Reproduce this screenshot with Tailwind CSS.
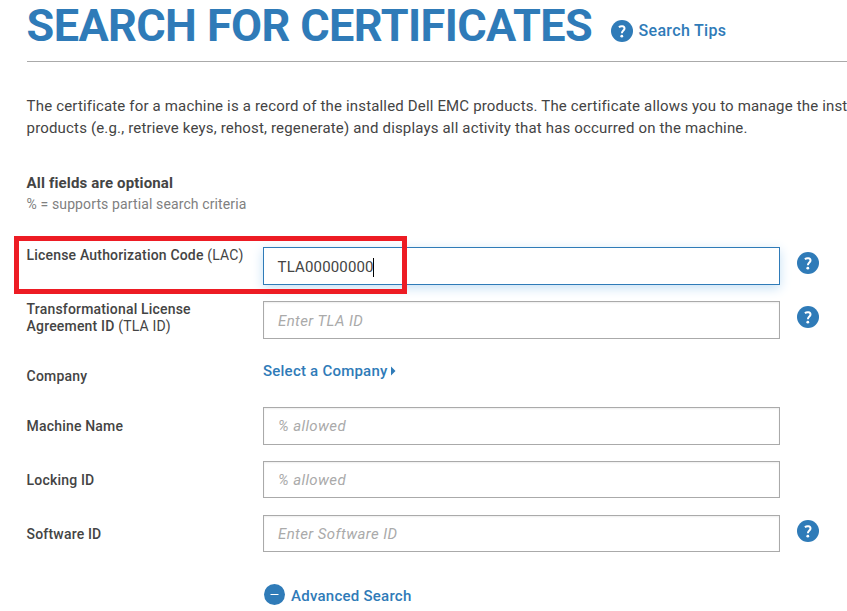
<!DOCTYPE html>
<html lang="en">
<head>
    <meta charset="UTF-8">
    <meta name="viewport" content="width=device-width, initial-scale=1.0">
    <script src="https://cdn.jsdelivr.net/npm/@tailwindcss/browser@4"></script>
    <title>Search for Certificates</title>
</head>
<body class="bg-white font-['Roboto',sans-serif] text-[#444] overflow-hidden">
    <svg class="hidden">
        <symbol id="help" viewBox="0 0 22 22">
            <circle cx="11" cy="11" r="11" fill="#2f7bb8"/>
            <path d="M7.9 7.2C9.6 5.8 13.5 5.8 13.5 8.4C13.5 10.5 10.9 10.5 10.9 13.2" fill="none" stroke="#fff" stroke-width="2"/>
            <circle cx="10.8" cy="16.2" r="1.4" fill="#fff"/>
        </symbol>
    </svg>

    <main class="ml-[26.6px] h-[611px] relative">
        <header class="flex h-[62px] border-b border-[#aaa]">
            <h1 class="text-[45px] leading-[52px] tracking-[-0.6px] font-bold text-[#2f7bb8] whitespace-nowrap w-[584.4px] shrink-0">SEARCH FOR CERTIFICATES</h1>
            <a class="flex items-center h-[22px] mt-5 text-[#2f7bb8] text-base tracking-[0.33px] font-medium whitespace-nowrap"><svg class="size-[22px] mr-[5.5px]"><use href="#help"/></svg>Search Tips</a>
        </header>

        <p class="mt-[33px] text-[15px] leading-[22px] tracking-[0.163px] whitespace-nowrap">The certificate for a machine is a record of the installed Dell EMC products. The certificate allows you to manage the inst<br>products (e.g., retrieve keys, rehost, regenerate) and displays all activity that has occurred on the machine.</p>

        <div class="mt-[33px] text-[15px] leading-[22px] tracking-[0.15px] font-bold">All fields are optional</div>
        <div class="text-sm leading-[21px] tracking-[0.12px] text-[#808080]">% = supports partial search criteria</div>

        <form class="mt-[32px] text-sm leading-[17px] tracking-[0.18px]">
            <div class="flex h-[54px]">
                <label class="w-[236.4px] shrink-0"><b class="font-medium">License Authorization Code</b> (LAC)</label>
                <div class="w-[517px] h-[38px] border border-[#2f7bb8] shadow-[0_3px_12px_#c5e0f5] bg-white flex items-center pl-[13.6px] pt-0.5 text-[15px] tracking-[0.15px]">TLA00000000<span class="w-px h-[19px] -ml-px bg-black"></span></div>
                <svg class="size-[22px] ml-[17px] mt-[4.5px]"><use href="#help"/></svg>
            </div>
            <div class="flex h-[54px]">
                <label class="w-[236.4px] shrink-0"><b class="font-medium">Transformational License<br>Agreement ID</b> (TLA ID)</label>
                <input class="w-[517px] h-[38px] border border-[#aaa] shadow-[inset_0_1px_2px_#eee] pl-[14px] pt-px text-[15px] tracking-[0.4px] italic placeholder:text-[#aaa]" placeholder="Enter TLA ID">
                <svg class="size-[22px] ml-[17px] mt-[4.5px]"><use href="#help"/></svg>
            </div>
            <div class="flex h-[52px]">
                <label class="w-[236.4px] shrink-0 pt-[13px] font-medium">Company</label>
                <a class="flex items-center h-4 mt-2 text-[15px] tracking-[0.23px] font-medium text-[#2f7bb8]">Select a Company<svg class="w-[5px] h-2.5 ml-[3px]" viewBox="0 0 5 10"><path d="M0 0.5L4.5 5L0 9.5Z" fill="#2f7bb8"/></svg></a>
            </div>
            <div class="flex h-[54px]">
                <label class="w-[236.4px] shrink-0 pt-[11px] font-medium">Machine Name</label>
                <input class="w-[517px] h-[38px] border border-[#aaa] shadow-[inset_0_1px_2px_#eee] pl-[14px] text-[15px] tracking-[0.4px] italic placeholder:text-[#aaa]" placeholder="% allowed">
            </div>
            <div class="flex h-[54px]">
                <label class="w-[236.4px] shrink-0 pt-[11px] font-medium">Locking ID</label>
                <input class="w-[517px] h-[37px] border border-[#aaa] shadow-[inset_0_1px_2px_#eee] pl-[14px] text-[15px] tracking-[0.4px] italic placeholder:text-[#aaa]" placeholder="% allowed">
            </div>
            <div class="flex h-[54px]">
                <label class="w-[236.4px] shrink-0 pt-[11px] font-medium">Software ID</label>
                <input class="w-[517px] h-[37px] border border-[#aaa] shadow-[inset_0_1px_2px_#eee] pl-[14px] text-[15px] tracking-[0.4px] italic placeholder:text-[#aaa]" placeholder="Enter Software ID">
                <svg class="size-[22px] ml-[17px] mt-[4.5px]"><use href="#help"/></svg>
            </div>
            <a class="flex items-center h-[21px] ml-[237.4px] mt-[15px] text-[15px] tracking-[0.25px] font-medium text-[#2f7bb8]">
                <svg class="size-[21px] mr-1.5" viewBox="0 0 21 21"><circle cx="10.5" cy="10.5" r="10.5" fill="#2f7bb8"/><path d="M6.5 10.5H14.5" stroke="#fff"/></svg><span class="pt-[3px]">Advanced Search</span>
            </a>
        </form>

        <!-- callout around the LAC row -->
        <div class="absolute left-[-12.6px] top-[236px] w-[393px] h-[58px] border-5 border-[#ed1c24]"></div>
    </main>
</body>
</html>
